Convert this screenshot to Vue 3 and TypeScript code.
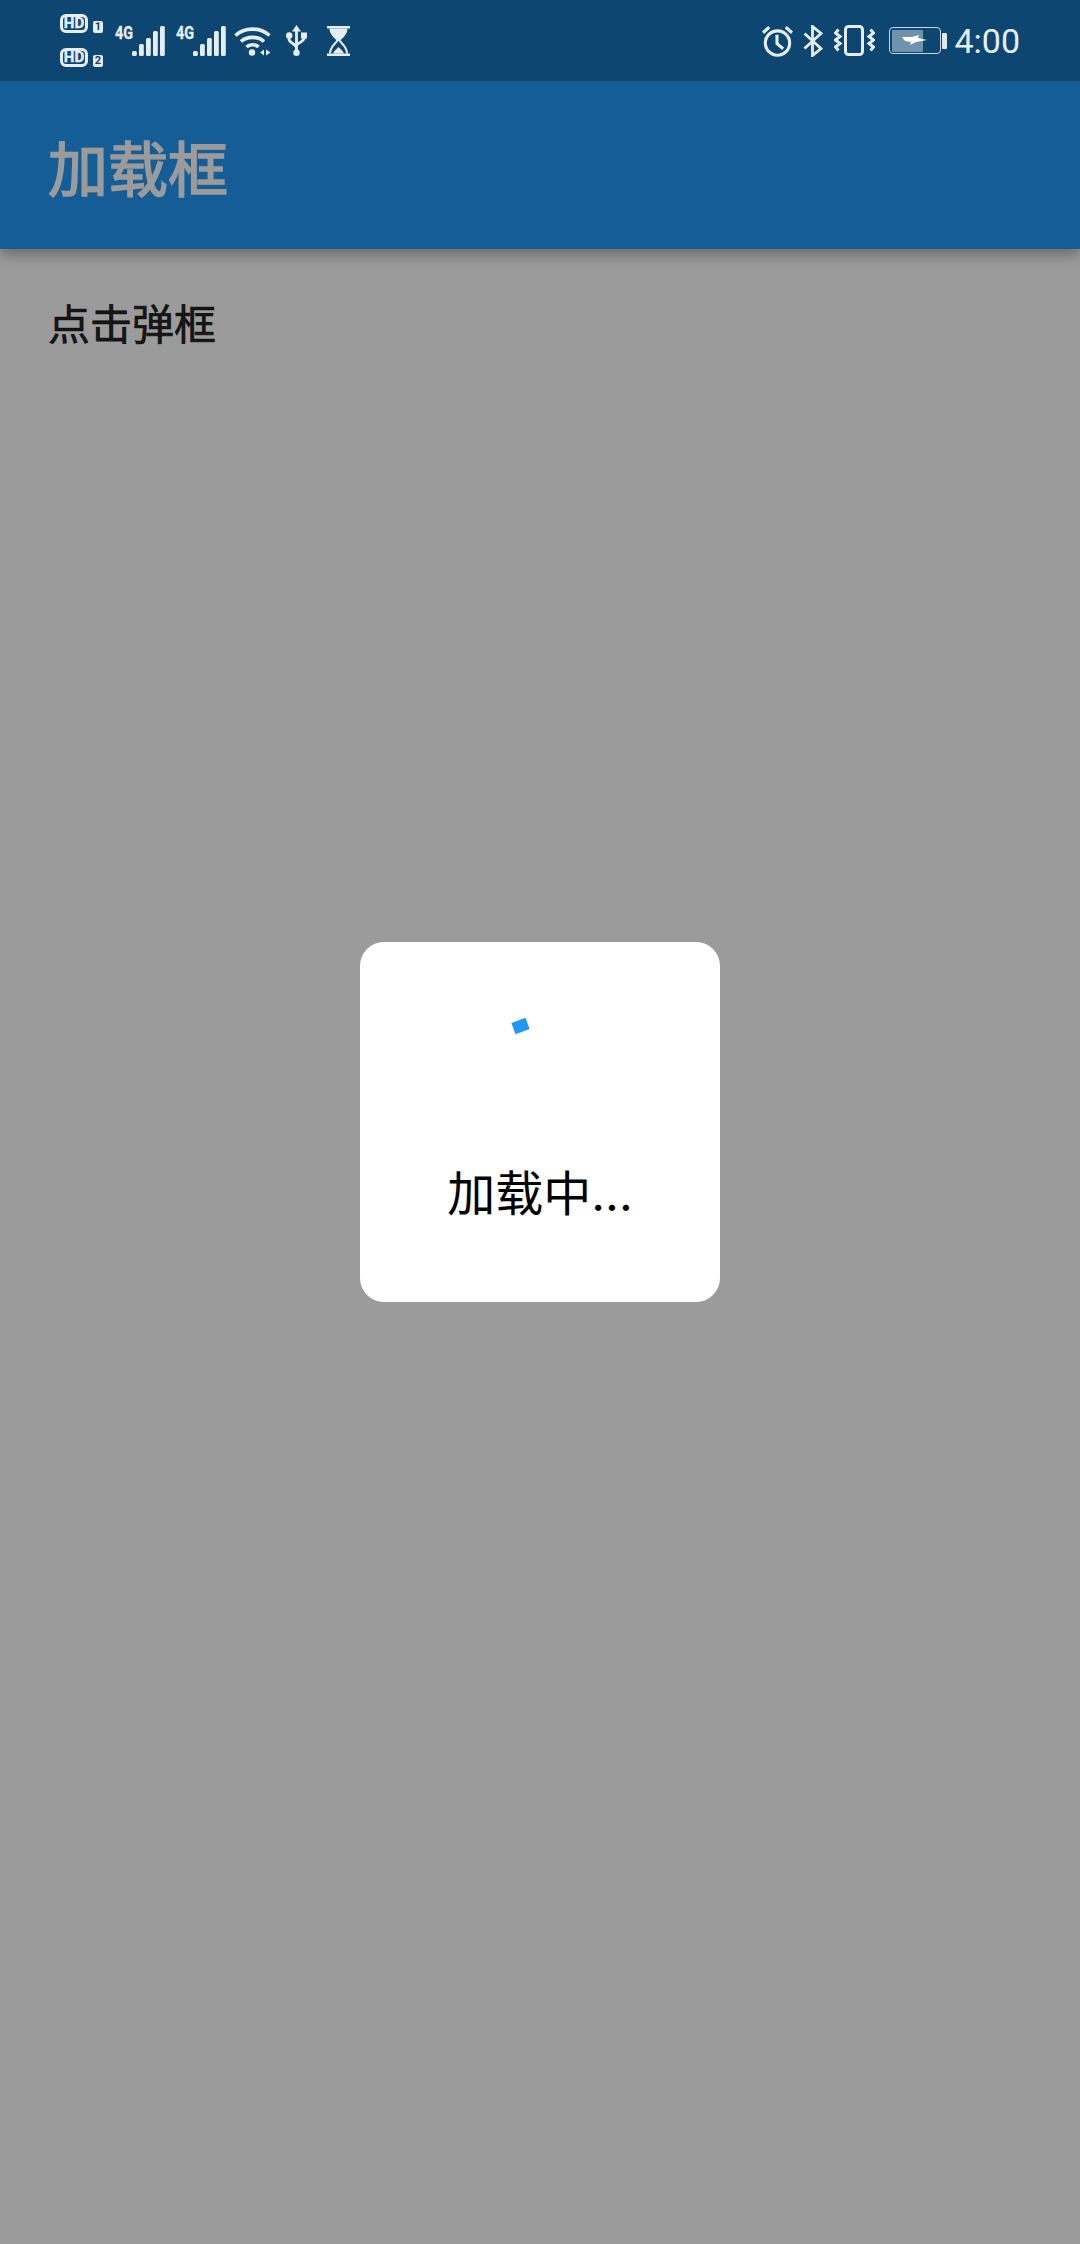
<script setup lang="ts">
const bars = [
  { x: 0, h: 5 },
  { x: 7, h: 12 },
  { x: 14, h: 18 },
  { x: 21, h: 25 },
  { x: 28, h: 30 },
]
const signals = [0, 1]
</script>

<template>
  <div class="screen">
    <div class="status-bar">
      <div class="status-left">
        <div class="hd-stack">
          <div v-for="n in [1, 2]" :key="n" class="hd-row">
            <span class="hd-pill">HD</span>
            <span class="hd-num">{{ n }}</span>
          </div>
        </div>
        <div v-for="s in signals" :key="s" class="signal">
          <span class="net">4G</span>
          <svg class="bars" width="33" height="30" viewBox="0 0 33 30">
            <rect v-for="b in bars" :key="b.x" :x="b.x" :y="30 - b.h" width="4.800" :height="b.h" rx="1.500" fill="#e7eef3" />
          </svg>
        </div>
        <svg class="wifi" width="38" height="30" viewBox="0 0 38 30" fill="none" stroke="#e7eef3" stroke-width="3.600">
          <path d="M1.500 9.500C10.500 1 26.500 1 35.500 9.500" />
          <path d="M7 15.500C13 10 24 10 30 15.500" />
          <path d="M12.500 21C15.500 18 21.500 18 24.500 21" />
          <circle cx="18" cy="26.500" r="3.200" fill="#e7eef3" stroke="none" />
          <path d="M30 23.500v6l-3.800-3zM32 23.500v6l4.500-3z" fill="#e7eef3" stroke="none" />
        </svg>
        <svg class="usb" width="21" height="31" viewBox="0 0 21 31" fill="none" stroke="#e7eef3" stroke-width="2.800">
          <path d="M10.500 4V28M3 11v3c0 4 7.500 5 7.500 9.500M18 11v2c0 4-7.500 5-7.500 8" />
          <path d="M10.500 0l4.500 6.500H6z" fill="#e7eef3" stroke="none" />
          <circle cx="3.200" cy="10.500" r="3.200" fill="#e7eef3" stroke="none" />
          <rect x="15" y="7.500" width="6" height="6" fill="#e7eef3" stroke="none" />
          <circle cx="10.500" cy="27.800" r="3.200" fill="#e7eef3" stroke="none" />
        </svg>
        <svg class="glass" width="23" height="30" viewBox="0 0 23 30" fill="none">
          <rect width="23" height="2.500" fill="#e7eef3" />
          <rect y="27.500" width="23" height="2.500" fill="#e7eef3" />
          <path d="M2.500 2.500H20.500C20.500 9 15 12 13 15H10C8 12 2.500 9 2.500 2.500z" fill="#e7eef3" />
          <path d="M10.500 14.500C8 18 3 21 3 27.500M12.500 14.500C15 18 20 21 20 27.500" stroke="#e7eef3" stroke-width="2" />
          <path d="M6 27.500C7.500 24 10 23 11.500 21 13 23 15.500 24 17 27.500z" fill="#e7eef3" />
        </svg>
      </div>
      <div class="status-right">
        <svg class="alarm" width="31" height="32" viewBox="0 0 30 31" fill="none" stroke="#e7eef3" stroke-width="3">
          <circle cx="15" cy="17.500" r="11.800" />
          <path d="M14.500 9.500v8.500l6 5" />
          <path d="M1 7.500L7 2M29 7.500L23 2" />
        </svg>
        <svg class="bt" width="20" height="32" viewBox="0 0 20 32" fill="none" stroke="#e7eef3" stroke-width="2.800">
          <path d="M1.500 8.500L18 23.500 9.500 30.500V1.500L18 8.500 1.500 23.500" />
        </svg>
        <svg class="vibe" width="41" height="31" viewBox="0 0 41 31" fill="none" stroke="#e7eef3">
          <rect x="11.500" y="1.500" width="17" height="28" rx="3" stroke-width="3" />
          <path d="M4.500 4.500L1.500 8l4.500 3.500L1.500 15 6 18.500 1.500 22l3 3.500M36.500 4.500L39.500 8 35 11.500 39.500 15 35 18.500 39.500 22l-3 3.500" stroke-width="3" />
        </svg>
        <div class="battery">
          <div class="battery-shell">
            <div class="battery-level"></div>
            <svg class="bolt" width="25" height="10" viewBox="0 0 25 10">
              <path d="M0 2H10L17 0 16 3 25 5 14 7 8 10 9 7 3 6z" fill="#ffffff" />
            </svg>
          </div>
          <div class="battery-cap"></div>
        </div>
        <span class="clock">4:00</span>
      </div>
    </div>

    <header class="app-bar"><h1 class="title">加载框</h1></header>
    <main class="body"><p class="action">点击弹框</p></main>

    <div class="scrim"></div>
    <div class="dialog-layer">
      <div class="dialog">
        <div class="spinner-area"><span class="spinner-tick"></span></div>
        <p class="loading-text">加载中...</p>
      </div>
    </div>
  </div>
</template>

<style>
html, body { margin: 0; padding: 0; background: #ffffff; }
</style>

<style scoped>
.screen {
  position: relative;
  width: 1080px;
  height: 2244px;
  overflow: hidden;
  background: #ffffff;
  display: flex;
  flex-direction: column;
  font-family: Roboto, "Noto Sans CJK SC", sans-serif;
}
.status-bar {
  position: relative;
  z-index: 3;
  height: 81px;
  flex: none;
  box-sizing: border-box;
  padding: 0 60px;
  background: #0e4672;
  display: flex;
  justify-content: space-between;
  align-items: center;
}
.status-left, .status-right { display: flex; align-items: center; }
.hd-stack { display: flex; flex-direction: column; gap: 15px; }
.hd-row { display: flex; align-items: flex-end; gap: 5px; height: 19px; }
.hd-pill {
  box-sizing: border-box;
  width: 28px;
  height: 19px;
  border: 3px solid #e7eef3;
  border-radius: 6px;
  color: #e7eef3;
  font: 700 15px/13px Roboto, sans-serif;
  text-align: center;
  -webkit-text-stroke: 0.400px #e7eef3;
}
.hd-num {
  width: 10px;
  height: 12px;
  border-radius: 2px;
  background: #e7eef3;
  color: #0e4672;
  font: 700 11px/12px Roboto, sans-serif;
  text-align: center;
}
.signal { display: flex; align-items: flex-start; width: 49px; height: 30px; margin-left: 12px; }
.net {
  width: 17px;
  flex: none;
  color: #e7eef3;
  font: 700 18px/14px Roboto, sans-serif;
  white-space: nowrap;
  transform: scaleX(0.8);
  transform-origin: left;
  -webkit-text-stroke: 0.300px #e7eef3;
}
.bars { display: block; flex: none; }
.wifi { margin-left: 9px; }
.usb { margin-left: 14px; }
.glass { margin-left: 20px; }
.alarm { margin-right: 10px; }
.bt { margin-right: 11px; }
.vibe { margin-right: 14px; }
.battery { display: flex; align-items: center; gap: 1px; margin-right: 7px; }
.battery-shell {
  position: relative;
  box-sizing: border-box;
  width: 52px;
  height: 27px;
  border: 1.500px solid #c5d5e1;
  border-radius: 4px;
  padding: 1.500px;
}
.battery-level { width: 31px; height: 100%; background: #6f92ad; border-radius: 1px; }
.bolt { position: absolute; left: 11.500px; top: 7px; }
.battery-cap { width: 5px; height: 16px; background: #dfe8ee; border-radius: 1px; }
.clock {
  color: #e7eef3;
  font: 400 34px/40px Roboto, sans-serif;
}
.app-bar {
  flex: none;
  height: 168px;
  box-sizing: border-box;
  padding: 1px 0 0 48px;
  background: #2299f8;
  display: flex;
  align-items: center;
  box-shadow: 0 6px 12px rgba(0, 0, 0, 0.3);
  position: relative;
  z-index: 1;
}
.title {
  margin: 0;
  color: #ffffff;
  font: 400 60px/70px "Noto Sans CJK SC", sans-serif;
  -webkit-text-stroke: 1.600px #ffffff;
}
.body { flex: 1; padding: 43px 48px 0; }
.action {
  margin: 0;
  color: rgba(0, 0, 0, 0.87);
  font: 400 42px/60px "Noto Sans CJK SC", sans-serif;
  -webkit-text-stroke: 0.700px rgba(0, 0, 0, 0.87);
}
.scrim {
  position: absolute;
  inset: 0;
  z-index: 2;
  background: rgba(0, 0, 0, 0.392);
}
.dialog-layer {
  position: absolute;
  inset: 0;
  z-index: 2;
  display: flex;
  justify-content: center;
  align-items: center;
}
.dialog {
  box-sizing: border-box;
  width: 360px;
  height: 360px;
  background: #ffffff;
  border-radius: 24px;
  display: flex;
  flex-direction: column;
  align-items: center;
}
.spinner-area { position: relative; width: 100%; height: 217px; flex: none; }
.spinner-tick {
  position: absolute;
  left: 152.500px;
  top: 78px;
  width: 15px;
  height: 12px;
  background: #2196f3;
  transform: rotate(-20deg);
}
.loading-text {
  margin: 0;
  color: #000000;
  font: 400 48px/70px Inter, "Noto Sans CJK SC", sans-serif;
}
</style>
